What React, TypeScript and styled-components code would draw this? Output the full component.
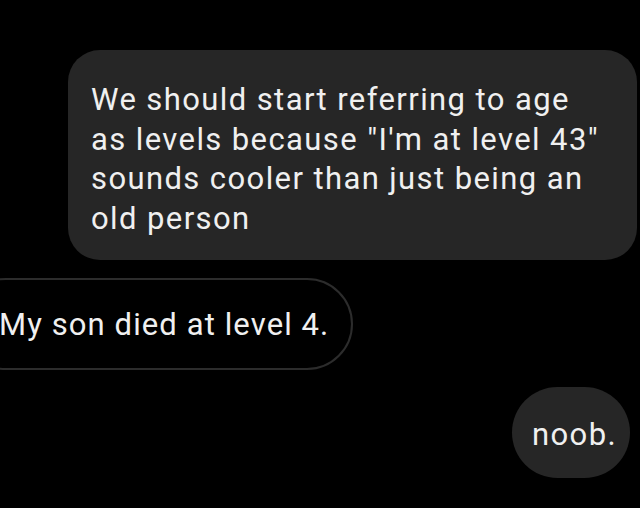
import styled, { createGlobalStyle } from "styled-components";

const GlobalStyle = createGlobalStyle`
  html, body {
    margin: 0;
    padding: 0;
    background: #000;
  }
  body {
    width: 640px;
    height: 508px;
    overflow: hidden;
    font-family: Roboto, "Noto Sans", "Liberation Sans", sans-serif;
  }
`;

const Thread = styled.div`
  display: flex;
  flex-flow: column nowrap;
  padding-top: 50px;
  width: 640px;
  height: 508px;
  box-sizing: border-box;
  background: #000;
  overflow: hidden;
`;

const Bubble = styled.div<{ $side: "in" | "out"; $outlined?: boolean }>`
  box-sizing: border-box;
  color: #f0f0f0;
  font-size: 31px;
  line-height: 39.5px;
  letter-spacing: 1.4px;
  white-space: nowrap;
  background: ${({ $outlined }) => ($outlined ? "transparent" : "#262626")};
  border: ${({ $outlined }) => ($outlined ? "2px solid #2c2c2c" : "none")};
  align-self: ${({ $side }) => ($side === "out" ? "flex-end" : "flex-start")};
`;

const LongBubble = styled(Bubble)`
  width: 569px;
  margin-right: 3px;
  padding: 30px 16px 22px 23px;
  border-radius: 32px;
`;

const ReplyBubble = styled(Bubble)`
  margin-top: 18px;
  margin-left: -40px;
  padding: 25px 22px 23px 37px;
  letter-spacing: 1.1px;
  border-radius: 46px;
`;

const ShortBubble = styled(Bubble)`
  margin-top: 17px;
  margin-right: 10px;
  width: 118px;
  height: 91px;
  padding: 28px 0 0 20px;
  border-radius: 46px;
`;

export default function App() {
  return (
    <>
      <GlobalStyle />
      <Thread>
        <LongBubble $side="out">
          We should start referring to age
          <br />
          as levels because "I'm at level 43"
          <br />
          sounds cooler than just being an
          <br />
          old person
        </LongBubble>
        <ReplyBubble $side="in" $outlined>
          My son died at level 4.
        </ReplyBubble>
        <ShortBubble $side="out">noob.</ShortBubble>
      </Thread>
    </>
  );
}
